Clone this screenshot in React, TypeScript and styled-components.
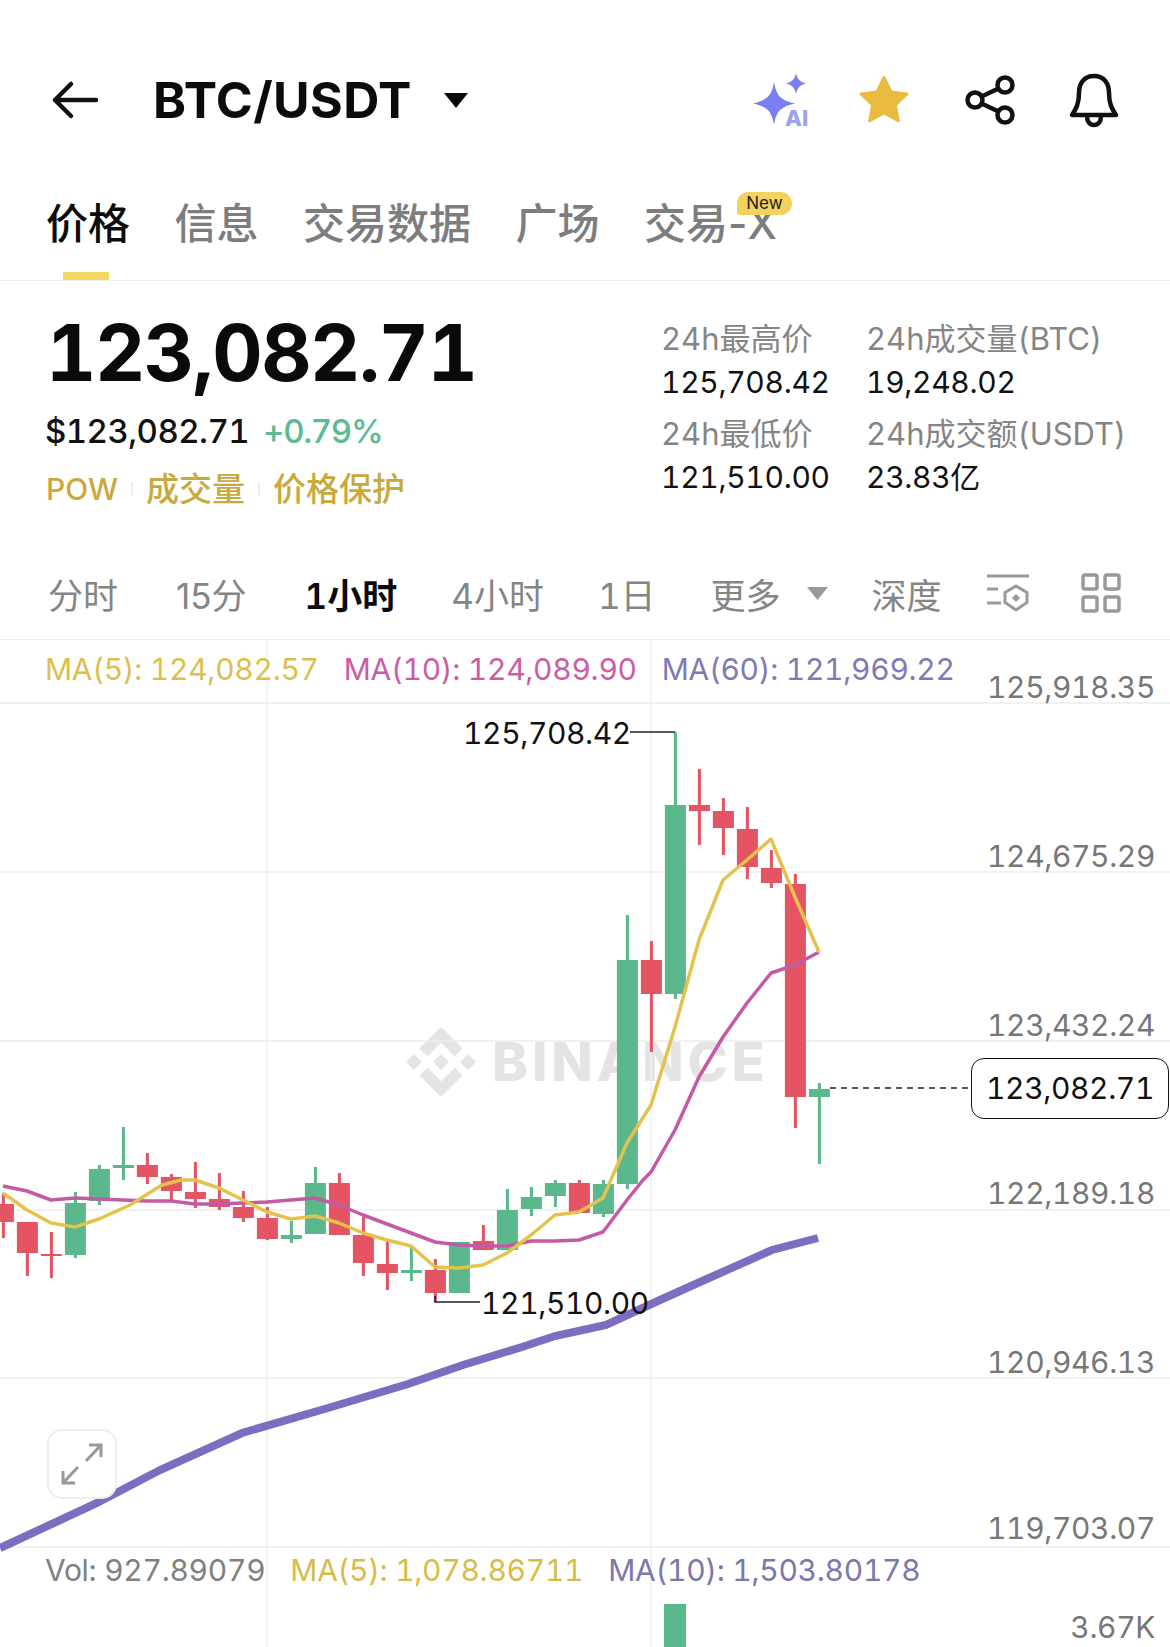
import React from "react";
import styled, { createGlobalStyle } from "styled-components";

const CJK = `"Noto Sans CJK SC"`;
const FONT = `Inter, ${CJK}, sans-serif`;

const Global = createGlobalStyle`
  html, body { margin: 0; padding: 0; background: #fff; }
  body {
    font-family: ${FONT};
    font-variant-numeric: tabular-nums;
    width: 1170px;
    height: 1647px;
    overflow: hidden;
  }
`;

const Page = styled.div`
  width: 1170px;
  height: 1647px;
  overflow: hidden;
  background: #fff;
  display: flex;
  flex-direction: column;
`;

const Header = styled.header`
  height: 96px;
  margin-top: 52px;
  padding: 0 51px 0 52px;
  box-sizing: border-box;
  display: flex;
  align-items: center;
`;
const Pair = styled.h1`
  margin: 0 0 0 55px;
  font-size: 50px;
  font-weight: 700;
  letter-spacing: 0.4px;
  color: #0b0b0b;
  line-height: 1;
`;
const HeaderActions = styled.div`
  margin-left: auto;
  display: flex;
  align-items: center;
`;
const Icon = styled.svg`
  display: block;
  flex: none;
  overflow: visible;
`;
const GapIcon = styled(Icon)<{ $gap: number }>`
  margin-left: ${(p) => p.$gap}px;
`;

const Tabs = styled.nav`
  height: 133px;
  padding-left: 46px;
  box-sizing: border-box;
  display: flex;
  gap: 44.5px;
  border-bottom: 1px solid #eeeeee;
`;
const Tab = styled.div<{ $active?: boolean }>`
  position: relative;
  font-size: 42px;
  font-variant-numeric: normal;
  line-height: 1;
  padding-top: 55px;
  font-weight: 500;
  color: ${(p) => (p.$active ? "#0c0c0c" : "#7d7d7d")};
  &::after {
    content: "";
    display: ${(p) => (p.$active ? "block" : "none")};
    position: absolute;
    left: 17px;
    bottom: 0;
    width: 46px;
    height: 8px;
    background: #f2d760;
  }
`;
const NewBadge = styled.span`
  position: absolute;
  top: 44px;
  right: -15px;
  width: 55px;
  height: 23px;
  border-radius: 12px 12px 12px 3px;
  background: #f3d35d;
  color: #222;
  font-size: 17px;
  font-weight: 400;
  line-height: 23px;
  text-align: center;
`;

const Summary = styled.section`
  height: 280px;
  box-sizing: border-box;
  display: flex;
  justify-content: space-between;
  padding: 27px 0 0 46px;
`;
const PriceCol = styled.div`
  display: flex;
  flex-direction: column;
`;
const BigPrice = styled.div`
  font-size: 78px;
  font-weight: 700;
  line-height: 90px;
  letter-spacing: -1.5px;
  color: #0a0a0a;
`;
const SubRow = styled.div`
  margin-top: 13px;
  display: flex;
  align-items: center;
  gap: 14px;
  line-height: 40px;
`;
const Fiat = styled.span`
  color: #111;
  font-size: 33px;
  font-weight: 500;
  letter-spacing: -0.55px;
  margin-left: -1px;
`;
const Change = styled.span`
  color: #5cba90;
  font-size: 33px;
  font-weight: 500;
  letter-spacing: -1.3px;
`;
const TagRow = styled.div`
  margin-top: 18px;
  display: flex;
  align-items: center;
  gap: 13px;
  font-size: 33px;
  font-weight: 500;
  line-height: 40px;
  color: #c8a93e;
`;
const TagLatin = styled.span`
  font-size: 30px;
`;
const TagSep = styled.i`
  width: 2px;
  height: 14px;
  background: #eeeeee;
`;
const Stats = styled.div`
  width: 509px;
  display: flex;
  flex-direction: column;
  gap: 12px;
  margin-top: 11px;
`;
const StatGroup = styled.div`
  display: grid;
  grid-template-columns: 205px 1fr;
  grid-auto-rows: 40px;
  row-gap: 3px;
`;
const StatLabel = styled.div`
  color: #858585;
  font-size: 31px;
  line-height: 40px;
  white-space: nowrap;
`;
const StatValue = styled.div`
  color: #111;
  font-size: 30px;
  letter-spacing: -0.3px;
  line-height: 40px;
  white-space: nowrap;
`;

const Intervals = styled.div`
  height: 79px;
  padding: 0 48px 14px 48px;
  box-sizing: border-box;
  display: flex;
  align-items: center;
  font-size: 35px;
  color: #858585;
  border-bottom: 1px solid #eeeeee;
`;
const Interval = styled.span<{ $active?: boolean; $proportional?: boolean; $gap: number }>`
  margin-left: ${(p) => p.$gap}px;
  white-space: nowrap;
  font-variant-numeric: ${(p) => (p.$proportional ? "normal" : "tabular-nums")};
  color: ${(p) => (p.$active ? "#0a0a0a" : "#858585")};
  font-weight: ${(p) => (p.$active ? 600 : 400)};
`;

const Chart = styled.div`
  position: relative;
  flex: 1;
  min-height: 0;
  overflow: hidden;
`;
const ChartSvg = styled.svg`
  position: absolute;
  inset: 0;
`;
const Watermark = styled.div`
  position: absolute;
  left: 406px;
  top: 387px;
  display: flex;
  align-items: center;
  gap: 16px;
  color: #e4e4e4;
  font-size: 54px;
  font-weight: 800;
  letter-spacing: 4px;
  line-height: 70px;
`;
const Legend = styled.div<{ $top: number }>`
  position: absolute;
  left: 45px;
  top: ${(p) => p.$top}px;
  display: flex;
  gap: 25px;
  font-size: 30px;
  letter-spacing: -0.28px;
  line-height: 40px;
  white-space: nowrap;
`;
const LegendItem = styled.span<{ $color: string }>`
  color: ${(p) => p.$color};
`;
const Axis = styled.div`
  position: absolute;
  right: 15px;
  top: 27px;
  display: flex;
  flex-direction: column;
  align-items: flex-end;
  font-size: 30px;
  letter-spacing: -0.38px;
  color: #777777;
`;
const AxisLabel = styled.div`
  height: 168.8px;
  line-height: 40px;
  &:nth-child(5) {
    height: 166px;
  }
`;
const VolumeLabel = styled.div`
  position: absolute;
  right: 15px;
  top: 967px;
  font-size: 30px;
  letter-spacing: -0.38px;
  line-height: 40px;
  color: #777777;
`;
const Extreme = styled.div<{ $left: number; $top: number }>`
  position: absolute;
  left: ${(p) => p.$left}px;
  top: ${(p) => p.$top}px;
  font-size: 30px;
  letter-spacing: -0.38px;
  line-height: 40px;
  color: #111;
`;
const PriceTag = styled.div`
  position: absolute;
  left: 971px;
  top: 418px;
  width: 198px;
  height: 61px;
  box-sizing: border-box;
  border: 1.5px solid #111;
  border-radius: 13px;
  background: #fff;
  font-size: 30px;
  letter-spacing: -0.38px;
  line-height: 58px;
  text-align: center;
  color: #111;
`;
const ExpandButton = styled.div`
  position: absolute;
  left: 47px;
  top: 789px;
  width: 70px;
  height: 70px;
  box-sizing: border-box;
  border: 2px solid #efefef;
  border-radius: 15px;
  background: #fff;
  display: flex;
  align-items: center;
  justify-content: center;
`;

const GREEN = "#5ab88c";
const RED = "#e55462";

/* x position comes from the candle's index; values: body top, body bottom, wick top, wick bottom */
type Candle = [number, number, number, number, "g" | "r"];
const candles: Candle[] = [
  [1204, 1222, 1193, 1238, "r"],
  [1222, 1253, 1222, 1276, "r"],
  [1254, 1256, 1232, 1278, "r"],
  [1203, 1255, 1192, 1258, "g"],
  [1169, 1201, 1165, 1205, "g"],
  [1165, 1168, 1127, 1180, "g"],
  [1165, 1177, 1153, 1184, "r"],
  [1177, 1191, 1174, 1200, "r"],
  [1192, 1199, 1162, 1208, "r"],
  [1199, 1207, 1173, 1210, "r"],
  [1207, 1218, 1191, 1222, "r"],
  [1218, 1239, 1207, 1240, "r"],
  [1235, 1239, 1221, 1243, "g"],
  [1183, 1234, 1167, 1234, "g"],
  [1183, 1235, 1173, 1235, "r"],
  [1235, 1263, 1217, 1276, "r"],
  [1264, 1273, 1240, 1290, "r"],
  [1270, 1273, 1246, 1281, "g"],
  [1270, 1293, 1259, 1302, "r"],
  [1242, 1293, 1242, 1293, "g"],
  [1241, 1250, 1225, 1250, "r"],
  [1210, 1250, 1189, 1250, "g"],
  [1197, 1209, 1187, 1216, "g"],
  [1183, 1196, 1180, 1207, "g"],
  [1183, 1213, 1180, 1213, "r"],
  [1184, 1214, 1180, 1217, "g"],
  [960, 1184, 915, 1189, "g"],
  [960, 994, 941, 1052, "r"],
  [805, 994, 732, 999, "g"],
  [805, 811, 769, 845, "r"],
  [811, 828, 798, 855, "r"],
  [829, 867, 807, 879, "r"],
  [868, 883, 850, 888, "r"],
  [884, 1097, 874, 1128, "r"],
  [1089, 1097, 1083, 1164, "g"],
];

const ma5 =
  "3,1193 27,1210 51,1223 75,1227 99,1219 130,1205 162,1185 181,1180 195,1180 219,1188 243,1200 267,1212 291,1219 315,1216 339,1223 363,1233 387,1240 411,1246 435,1267 459,1268 483,1265 507,1253 531,1235 555,1215 579,1212 603,1198 627,1143 651,1105 675,1027 699,940 723,880 747,860 771,839 795,897 819,952";
const ma10 =
  "3,1186 27,1191 51,1200 75,1198 99,1199 123,1200 147,1201 171,1201 195,1204 219,1204 243,1203 267,1202 291,1200 315,1198 339,1205 363,1215 387,1224 411,1233 435,1242 459,1245 483,1246 507,1246 531,1241 555,1241 579,1240 603,1232 627,1200 643,1180 651,1172 675,1130 699,1077 723,1037 747,1003 771,973 795,965 819,952";
const ma60 =
  "0,1548 97,1503 160,1470 242,1433 328,1408 408,1384 463,1365 522,1347 555,1336 606,1325 660,1300 700,1282 772,1250 818,1238";

const gridY = [703, 872, 1041, 1210, 1378, 1547];

export default function App() {
  return (
    <Page>
      <Global />
      <Header>
        <Icon width="46" height="36" viewBox="0 0 46 36" fill="none" stroke="#111" strokeWidth="4.5" strokeLinecap="round" strokeLinejoin="round">
          <path d="M19 2 3 18l16 16M3 18h41" />
        </Icon>
        <Pair>BTC/USDT</Pair>
        <GapIcon $gap={31} width="26" height="17" viewBox="0 0 26 17">
          <path d="M1 1h24L13 16z" fill="#0a0a0a" />
        </GapIcon>
        <HeaderActions>
          <Icon width="60" height="54" viewBox="0 0 60 54">
            <path d="M21 9c2.500 14 6.500 18 21 21.500-14.500 3.500-18.500 7.500-21 21.500-2.500-14-6.500-18-21-21.500 14.500-3.500 18.500-7.500 21-21.500z" fill="#7a80f2" />
            <path d="M43 0c1.500 6.500 3.500 8.500 10 10.500-6.500 2-8.500 4-10 10.500-1.500-6.500-3.500-8.500-10-10.500 6.500-2 8.500-4 10-10.500z" fill="#7a80f2" />
            <text x="32" y="53" fontFamily="Inter, sans-serif" fontWeight="800" fontSize="22" fill="#9da2f2">AI</text>
          </Icon>
          <GapIcon $gap={45} width="52" height="50" viewBox="0 0 52 50">
            <path d="M26 2.500l7 14.500 16 2-11.700 11 3 15.800L26 38l-14.300 7.800 3-15.800L3 19l16-2z" fill="#e9bc3f" stroke="#e9bc3f" strokeWidth="3" strokeLinejoin="round" />
          </GapIcon>
          <GapIcon $gap={54} width="52" height="50" viewBox="0 0 52 50" fill="none" stroke="#111" strokeWidth="4.5">
            <circle cx="41" cy="10" r="7.5" />
            <circle cx="41" cy="40" r="7.5" />
            <circle cx="11" cy="25" r="7.5" />
            <path d="M34.500 13.500 17.500 21.500M17.500 28.500l17 8" />
          </GapIcon>
          <GapIcon $gap={53} width="50" height="54" viewBox="0 0 50 54" fill="none" stroke="#111" strokeWidth="4.5" strokeLinejoin="round" strokeLinecap="round">
            <path d="M25 3C14.500 3 10 11 10 20c0 11-3 16-7 22h44c-4-6-7-11-7-22 0-9-4.500-17-15-17z" />
            <path d="M18 43c0 6 3 9 7 9s7-3 7-9" />
          </GapIcon>
        </HeaderActions>
      </Header>

      <Tabs>
        <Tab $active>价格</Tab>
        <Tab>信息</Tab>
        <Tab>交易数据</Tab>
        <Tab>广场</Tab>
        <Tab>
          交易-X
          <NewBadge>New</NewBadge>
        </Tab>
      </Tabs>

      <Summary>
        <PriceCol>
          <BigPrice>123,082.71</BigPrice>
          <SubRow>
            <Fiat>$123,082.71</Fiat>
            <Change>+0.79%</Change>
          </SubRow>
          <TagRow>
            <TagLatin>POW</TagLatin>
            <TagSep />
            <span>成交量</span>
            <TagSep />
            <span>价格保护</span>
          </TagRow>
        </PriceCol>
        <Stats>
          <StatGroup>
            <StatLabel>24h最高价</StatLabel>
            <StatLabel>24h成交量(BTC)</StatLabel>
            <StatValue>125,708.42</StatValue>
            <StatValue>19,248.02</StatValue>
          </StatGroup>
          <StatGroup>
            <StatLabel>24h最低价</StatLabel>
            <StatLabel>24h成交额(USDT)</StatLabel>
            <StatValue>121,510.00</StatValue>
            <StatValue>23.83亿</StatValue>
          </StatGroup>
        </Stats>
      </Summary>

      <Intervals>
        <Interval $gap={0}>分时</Interval>
        <Interval $gap={58} $proportional>15分</Interval>
        <Interval $gap={58} $active>1小时</Interval>
        <Interval $gap={54}>4小时</Interval>
        <Interval $gap={54}>1日</Interval>
        <Interval $gap={55}>更多</Interval>
        <GapIcon $gap={26} width="21" height="13" viewBox="0 0 21 13">
          <path d="M0 0h21L10.500 13z" fill="#999" />
        </GapIcon>
        <Interval $gap={44}>深度</Interval>
        <GapIcon $gap={45} width="44" height="40" viewBox="0 0 44 40" fill="none" stroke="#999" strokeWidth="3">
          <path d="M0 3h42M0 16h11M0 30h14" />
          <path d="M29 13l11 6.500v10L29 37l-11-7.500v-10z" />
          <path d="M29 21l4 4-4 4-4-4z" fill="#999" stroke="none" />
        </GapIcon>
        <GapIcon $gap={50} width="40" height="40" viewBox="0 0 40 40" fill="none" stroke="#999" strokeWidth="3.5">
          <rect x="2" y="2" width="14" height="14" rx="2" />
          <rect x="24" y="2" width="14" height="14" rx="2" />
          <rect x="2" y="24" width="14" height="14" rx="2" />
          <rect x="24" y="24" width="14" height="14" rx="2" />
        </GapIcon>
      </Intervals>

      <Chart>
        <Watermark>
          <Icon width="70" height="70" viewBox="0 0 126.61 126.61" fill="#e4e4e4">
            <path d="M38.73 53.2l24.59-24.58 24.6 24.6 14.3-14.31L63.32 0 24.43 38.9z" />
            <path d="M0 63.31l14.3-14.31 14.31 14.31-14.31 14.3z" />
            <path d="M38.73 73.41l24.59 24.59 24.6-24.6 14.31 14.29-38.9 38.91-38.91-38.88z" />
            <path d="M98 63.31l14.3-14.31 14.31 14.3-14.31 14.32z" />
            <path d="M77.83 63.3L63.32 48.78 52.59 59.51l-1.24 1.23-2.54 2.54 14.51 14.5 14.51-14.47z" />
          </Icon>
          BINANCE
        </Watermark>

        <ChartSvg width="1170" height="1007" viewBox="0 640 1170 1007">
          {gridY.map((y) => (
            <line key={y} x1="0" x2="1170" y1={y} y2={y} stroke="#ededed" strokeWidth="1.5" />
          ))}
          <line x1="267" x2="267" y1="640" y2="1647" stroke="#f1f1f1" strokeWidth="1.5" />
          <line x1="651" x2="651" y1="640" y2="1647" stroke="#f1f1f1" strokeWidth="1.5" />

          {candles.map(([top, bottom, wickTop, wickBottom, kind], i) => {
            const x = 3.4 + i * 24;
            const color = kind === "g" ? GREEN : RED;
            return (
              <g key={i} fill={color}>
                <rect x={x - 1.5} y={wickTop} width="3" height={wickBottom - wickTop} />
                <rect x={x - 10.5} y={top} width="21" height={bottom - top} />
              </g>
            );
          })}

          <polyline points={ma60} fill="none" stroke="#7e6cc0" strokeWidth="8" />
          <polyline points={ma10} fill="none" stroke="#c45aa6" strokeWidth="3.5" strokeLinejoin="round" />
          <polyline points={ma5} fill="none" stroke="#e4c24e" strokeWidth="3.5" strokeLinejoin="round" />

          <polyline points="630,732 675,732" fill="none" stroke="#222" strokeWidth="1.5" />
          <polyline points="435,1296 435,1302 480,1302" fill="none" stroke="#222" strokeWidth="1.5" />
          <line x1="830" x2="969" y1="1088" y2="1088" stroke="#222" strokeWidth="1.5" strokeDasharray="6 5" />
          <rect x="664" y="1604" width="22" height="43" fill={GREEN} />
        </ChartSvg>

        <Legend $top={9}>
          <LegendItem $color="#dcc04f">MA(5): 124,082.57</LegendItem>
          <LegendItem $color="#cc5ca6">MA(10): 124,089.90</LegendItem>
          <LegendItem $color="#8079b6">MA(60): 121,969.22</LegendItem>
        </Legend>

        <Axis>
          <AxisLabel>125,918.35</AxisLabel>
          <AxisLabel>124,675.29</AxisLabel>
          <AxisLabel>123,432.24</AxisLabel>
          <AxisLabel>122,189.18</AxisLabel>
          <AxisLabel>120,946.13</AxisLabel>
          <AxisLabel>119,703.07</AxisLabel>
        </Axis>
        <VolumeLabel>3.67K</VolumeLabel>

        <Extreme $left={463} $top={73}>125,708.42</Extreme>
        <Extreme $left={481} $top={643}>121,510.00</Extreme>
        <PriceTag>123,082.71</PriceTag>

        <ExpandButton>
          <Icon width="44" height="44" viewBox="0 0 44 44" fill="none" stroke="#999" strokeWidth="3">
            <path d="M41 3 26 19M29 3h12v12M3 41l15-16M15 41H3V29" />
          </Icon>
        </ExpandButton>

        <Legend $top={910}>
          <LegendItem $color="#808080">Vol: 927.89079</LegendItem>
          <LegendItem $color="#d8bc4a">MA(5): 1,078.86711</LegendItem>
          <LegendItem $color="#7c77ac">MA(10): 1,503.80178</LegendItem>
        </Legend>
      </Chart>
    </Page>
  );
}
